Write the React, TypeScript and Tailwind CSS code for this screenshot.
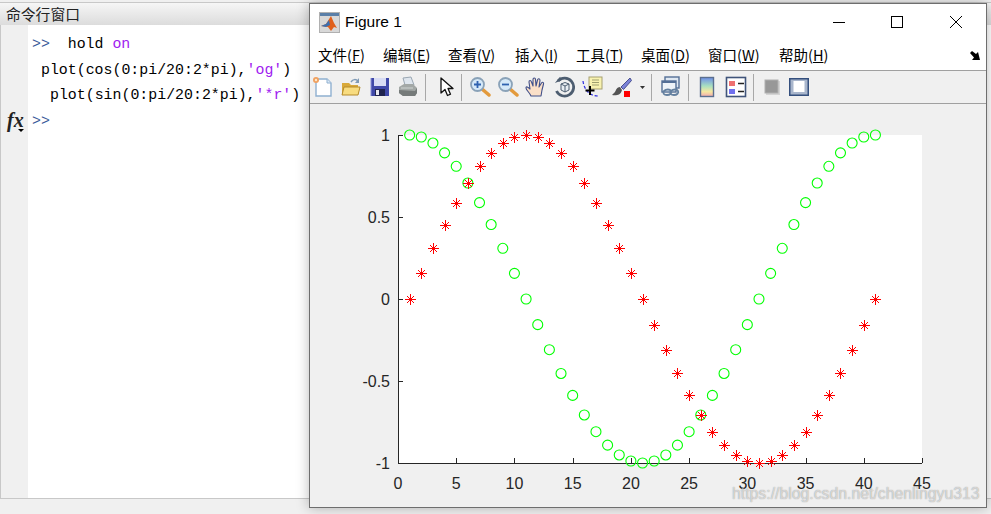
import React from "react";

const sans = "font-['Noto_Sans_CJK_SC','Noto_Sans',sans-serif]";

const menus = [
  ["文件", "F", "w-[65px]"],
  ["编辑", "E", "w-[65px]"],
  ["查看", "V", "w-[67px]"],
  ["插入", "I", "w-[61px]"],
  ["工具", "T", "w-[65px]"],
  ["桌面", "D", "w-[67px]"],
  ["窗口", "W", "w-[71px]"],
  ["帮助", "H", "w-[60px]"],
];

const samples = Array.from({ length: 41 }, (_, i) => i);
const px = (v: number) => 398 + (v * 524) / 45;
const py = (v: number) => 299 - v * 164;

function Icon({ children, className = "" }: { children: React.ReactNode; className?: string }) {
  return (
    <svg width="22" height="22" viewBox="0 0 22 22" fill="none" className={`shrink-0 ${className}`} aria-hidden>
      {children}
    </svg>
  );
}

function Sep({ className = "" }: { className?: string }) {
  return <div className={`h-[27px] w-px shrink-0 bg-[#a8a8a8] ${className}`} />;
}

function Toolbar() {
  return (
    <div className="flex h-[33px] items-center border-b border-[#a0a0a0] bg-[#f0f0f0] pl-[2px]">
      <div className="flex gap-[6.3px]">
        {/* new */}
        <Icon>
          <path d="M4 3h11l4 4v13H4z" fill="#fff" stroke="#8fb0d0" strokeWidth="1.4" />
          <path d="M15 3v4h4" fill="#dbe8f5" stroke="#8fb0d0" />
          <circle cx="4" cy="4" r="3" fill="#f0a060" />
          <circle cx="4" cy="4" r="1.2" fill="#fde8c8" />
        </Icon>
        {/* open */}
        <Icon>
          <path d="M2 7h7l2 2h7v10H2z" fill="#d9a93a" />
          <path d="M2 19l2-8h16l-2 8z" fill="#f8dc80" stroke="#b58a2a" />
          <path d="M11 6c2-3 5-3 7-1" stroke="#7f9ab5" strokeWidth="1.5" />
          <path d="M19 2v5h-4z" fill="#7f9ab5" />
        </Icon>
        {/* save */}
        <Icon>
          <rect x="2" y="2" width="18" height="18" fill="#3f48a8" />
          <rect x="5" y="2" width="12" height="8" fill="#d8dcf4" />
          <rect x="6" y="13" width="10" height="7" fill="#20244f" />
          <rect x="7" y="14" width="3" height="5" fill="#e8e8f0" />
          <path d="M2 2v18" stroke="#8a90d8" />
        </Icon>
        {/* print */}
        <Icon>
          <path d="M6 2l8-1 3 8H8z" fill="#dfe6ee" stroke="#9aa7b3" />
          <path d="M2 11l5-3h9l4 4v5l-2 3H6l-4-3z" fill="#a3a8a6" />
          <path d="M2 14l16 1 2-3v5l-2 3H6l-4-3z" fill="#767b7a" />
          <path d="M4 12h12" stroke="#cfd4d2" />
        </Icon>
      </div>
      <Sep className="ml-[6px]" />
      <Icon className="ml-[9px]">
        <path d="M6 2v15l4-3.500 2.500 6 3-1.300-2.500-5.700h5z" fill="#fff" stroke="#111" strokeWidth="1.300" strokeLinejoin="round" />
      </Icon>
      <Sep className="ml-[4px]" />
      <div className="ml-[7px] flex gap-[6.200px]">
        {/* zoom in */}
        <Icon>
          <path d="M13 13l7 6" stroke="#e39a3c" strokeWidth="3.500" strokeLinecap="round" />
          <circle cx="8.500" cy="8.500" r="6.500" fill="#d4e8f8" stroke="#8aa2b8" strokeWidth="1.800" />
          <path d="M5 8.500h7M8.500 5v7" stroke="#2f62b0" strokeWidth="1.800" />
        </Icon>
        {/* zoom out */}
        <Icon>
          <path d="M13 13l7 6" stroke="#e39a3c" strokeWidth="3.500" strokeLinecap="round" />
          <circle cx="8.500" cy="8.500" r="6.500" fill="#d4e8f8" stroke="#8aa2b8" strokeWidth="1.800" />
          <path d="M5 8.500h7" stroke="#2f62b0" strokeWidth="1.800" />
        </Icon>
        {/* hand */}
        <Icon>
          <path
            d="M6 20c-1-3-5-6-5-8s2-1 4 1L4 6c0-2 2-2 2.500 0L8 10 8 3.500c0-2 2.500-2 2.500 0L11 10l1.500-6c.5-2 2.500-1.500 2.500.5L14 11l2.500-4c1-1.500 2.500-.5 2 1L17 14l-1 6z"
            fill="#fbe0c8"
            stroke="#40508a"
            strokeWidth="1.100"
            strokeLinejoin="round"
          />
        </Icon>
        {/* rotate */}
        <Icon>
          <path d="M5 5a9 9 0 1 1-1.500 10" stroke="#4d5d70" strokeWidth="2.800" />
          <path d="M1 6h7V2z" fill="#4d5d70" transform="rotate(-20 4 4)" />
          <path d="M8 8l4-1.500 4 1.500v6l-4 2-4-2z" fill="#e8edf2" stroke="#4d5d70" />
          <path d="M8 8l4 2 4-2M12 10v6" stroke="#4d5d70" />
        </Icon>
        {/* data cursor */}
        <Icon>
          <path d="M1 5c1 8 6 15 15 15" stroke="#2a2ae0" strokeWidth="1.200" strokeDasharray="3 2" />
          <rect x="7" y="1" width="13" height="12" fill="#f8f2b0" stroke="#a6a070" />
          <path d="M10 4h7M10 6.500h7M10 9h7" stroke="#a0a070" />
          <path d="M8 10v9M3.500 14.500h9" stroke="#000" strokeWidth="2" />
        </Icon>
        {/* brush */}
        <Icon>
          <path d="M20 2l-9 9 2.500 2.500 8-9z" fill="#7a82d8" stroke="#49508f" />
          <path d="M10 11c-3 0-4 3-5 5l-3 3c4 1 9 0 10-5z" fill="#545454" />
          <rect x="14" y="15" width="6" height="6" fill="#ff0000" />
        </Icon>
      </div>
      <svg width="5" height="3" viewBox="0 0 5 3" className="ml-[8px] shrink-0" aria-hidden>
        <path d="M0 0h5L2.500 3z" fill="#333" />
      </svg>
      <Sep className="ml-[6px]" />
      {/* link plot */}
      <Icon className="ml-[8px]">
        <rect x="5" y="1" width="14" height="11" fill="#dfe8f2" stroke="#546f96" strokeWidth="1.400" />
        <rect x="2" y="5" width="14" height="11" fill="#eef3f8" stroke="#546f96" strokeWidth="1.400" />
        <rect x="2" y="5" width="14" height="2" fill="#546f96" />
        <path d="M4 15c2-2 6-2 7 0s-1 4-4 4-5-2-3-4zM11 15c2-2 6-2 7 0s-1 4-4 4-5-2-3-4z" stroke="#64809f" strokeWidth="1.800" />
      </Icon>
      <Sep className="ml-[6px]" />
      {/* colorbar */}
      <Icon className="ml-[7px]">
        <defs>
          <linearGradient id="cb" x1="0" y1="0" x2="0" y2="1">
            <stop offset="0" stopColor="#6f8fe8" />
            <stop offset="0.45" stopColor="#a8e0c0" />
            <stop offset="0.75" stopColor="#f8e8a0" />
            <stop offset="1" stopColor="#f0a8b0" />
          </linearGradient>
        </defs>
        <rect x="4.500" y="1.500" width="13" height="19" fill="url(#cb)" stroke="#5b6f8f" strokeWidth="1.400" />
      </Icon>
      {/* legend */}
      <Icon className="ml-[7px]">
        <rect x="1.500" y="1.500" width="19" height="19" fill="#fff" stroke="#40547a" strokeWidth="1.600" />
        <rect x="4" y="5" width="6" height="5" fill="#ee7070" />
        <rect x="4" y="13" width="6" height="5" fill="#7070ee" />
        <path d="M13 7.500h6M13 15.500h6" stroke="#222" strokeWidth="1.500" />
      </Icon>
      <Sep className="ml-[6px]" />
      {/* hide plot tools */}
      <Icon className="ml-[7px]">
        <rect x="5" y="5" width="14" height="14" fill="#d4d4d4" />
        <rect x="4" y="4" width="13" height="13" fill="#989898" stroke="#b0b0b0" />
      </Icon>
      {/* show plot tools */}
      <Icon className="ml-[5px]">
        <rect x="1" y="2" width="20" height="18" fill="#35507e" />
        <rect x="2.500" y="3.500" width="17" height="15" fill="#a9b6cc" />
        <rect x="5.500" y="5" width="11" height="11" fill="#fff" />
      </Icon>
    </div>
  );
}

function Plot() {
  const xt = [0, 5, 10, 15, 20, 25, 30, 35, 40, 45];
  const yt = [1, 0.5, 0, -0.5, -1];
  return (
    <svg width="676" height="403" viewBox="310 104 676 403" className="block">
      <rect x="398" y="135" width="524" height="328" fill="#fff" />
      <path d="M398.500 135v328.500H922" stroke="#262626" fill="none" />
      {xt.map((t) => (
        <g key={t}>
          <path d={`M${Math.round(px(t)) + 0.5} 463v-5`} stroke="#262626" />
          <text x={px(t)} y="488.500" textAnchor="middle" fontSize="16" fill="#262626" fontFamily="Liberation Sans">
            {t}
          </text>
        </g>
      ))}
      {yt.map((t) => (
        <g key={t}>
          <path d={`M398 ${Math.round(py(t)) + 0.5}h5`} stroke="#262626" />
          <text x="390" y={py(t) + 6} textAnchor="end" fontSize="16" fill="#262626" fontFamily="Liberation Sans">
            {t}
          </text>
        </g>
      ))}
      {samples.map((i) => (
        <circle
          key={i}
          cx={px(i + 1)}
          cy={py(Math.cos((i * Math.PI) / 20))}
          r="5"
          fill="none"
          stroke="#00ff00"
          strokeWidth="1.100"
        />
      ))}
      {samples.map((i) => {
        const x = Math.round(px(i + 1)) + 0.5;
        const y = Math.round(py(Math.sin((i * Math.PI) / 20))) + 0.5;
        return (
          <path
            key={i}
            d={`M${x - 5.500} ${y}h11M${x} ${y - 5.500}v11M${x - 3.500} ${y - 3.500}l7 7M${x - 3.500} ${y + 3.500}l7-7`}
            stroke="#ff0000"
            strokeWidth="1"
          />
        );
      })}
    </svg>
  );
}

function FigureWindow() {
  return (
    <div className="absolute left-[309px] top-[3px] h-[505px] w-[678px] border border-[#6e6e6e] bg-[#f0f0f0] shadow-[0_0_12px_rgba(0,0,0,0.28)]">
      <div className="flex h-[36px] items-center bg-white pl-[9px]">
        <svg width="21" height="21" viewBox="0 0 21 21" aria-hidden>
          <rect x="0.500" y="0.500" width="20" height="20" fill="#d8d8d8" stroke="#b0b0b0" />
          <rect x="1" y="1" width="19" height="3" fill="#5a7fa8" />
          <path d="M2 14l5-2 5-8 3 7 3 5-3-1-3 4-3-4z" fill="#e0601c" />
          <path d="M2 14l5-2 3-4 1 5-4 2z" fill="#3b6fb0" />
        </svg>
        <span className="ml-[5px] font-['Liberation_Sans',sans-serif] text-[15.500px] text-black">Figure 1</span>
        <div className="ml-auto flex items-center">
          <div className="h-px w-[12px] bg-black" />
          <div className="ml-[46px] h-[12px] w-[12px] border border-black" />
          <svg width="12" height="12" viewBox="0 0 12 12" className="ml-[47px] mr-[24px]" aria-hidden>
            <path d="M0 0l12 12M12 0L0 12" stroke="#000" />
          </svg>
        </div>
      </div>
      <div className={`flex h-[31px] items-center border-b border-[#a0a0a0] bg-white pl-[8px] text-[14.500px] text-black ${sans}`}>
        {menus.map(([zh, key, w]) => (
          <span key={zh} className={`${w} whitespace-nowrap`}>
            {zh}(<span className="underline">{key}</span>)
          </span>
        ))}
        <svg width="10" height="9" viewBox="0 0 10 9" className="ml-auto mr-[6px]" aria-hidden>
          <path d="M0 2l2-2 4 3 2-2 2 8H2l2-2.500z" fill="#000" />
        </svg>
      </div>
      <Toolbar />
      <Plot />
      <span className="absolute left-[422px] top-[478px] whitespace-nowrap font-['Liberation_Sans',sans-serif] text-[15.800px] text-white/60 [text-shadow:0_0_1px_rgba(90,90,90,0.7)]">
        https://blog.csdn.net/chenlingyu313
      </span>
    </div>
  );
}

function CommandWindow() {
  const code = "font-['Liberation_Mono',monospace] text-[14.900px] leading-[25.700px] whitespace-pre";
  return (
    <div className="flex h-[499px] flex-col border-b border-[#c8c8c8]">
      <div className="h-[3px] border-b border-[#c8c8c8]" />
      <div className={`flex h-[22px] items-center bg-gradient-to-b from-[#f6f6f6] to-[#dcdcdc] pl-[6px] text-[14.800px] text-[#222] ${sans}`}>
        命令行窗口
      </div>
      <div className="flex flex-1 border-l border-[#c8c8c8]">
        <div className="relative w-[27px] bg-[#f0f0f0]">
          <span className="absolute left-[6px] top-[83px] font-['Liberation_Serif',serif] text-[20px] font-bold italic leading-[24px] text-[#222]">
            fx
          </span>
          <div className="absolute left-[17px] top-[104px] h-0 w-0 border-x-[3px] border-t-[3px] border-x-transparent border-t-black" />
        </div>
        <div className={`flex-1 bg-white pt-[7px] text-black ${code}`}>
          <div className="pl-[4px]">
            <span className="text-[#3a5a9a]">{">>"}</span>
            {"  hold "}
            <span className="text-[#a020f0]">on</span>
          </div>
          <div className="pl-[13px]">
            {"plot(cos(0:pi/20:2*pi),"}
            <span className="text-[#a020f0]">'og'</span>)
          </div>
          <div className="pl-[22px]">
            {"plot(sin(0:pi/20:2*pi),"}
            <span className="text-[#a020f0]">'*r'</span>)
          </div>
          <div className="pl-[4px] text-[#3a5a9a]">{">>"}</div>
        </div>
      </div>
    </div>
  );
}

export default function App() {
  return (
    <div className="relative h-[514px] w-[991px] overflow-hidden bg-[#f0f0f0]">
      <CommandWindow />
      <FigureWindow />
    </div>
  );
}
